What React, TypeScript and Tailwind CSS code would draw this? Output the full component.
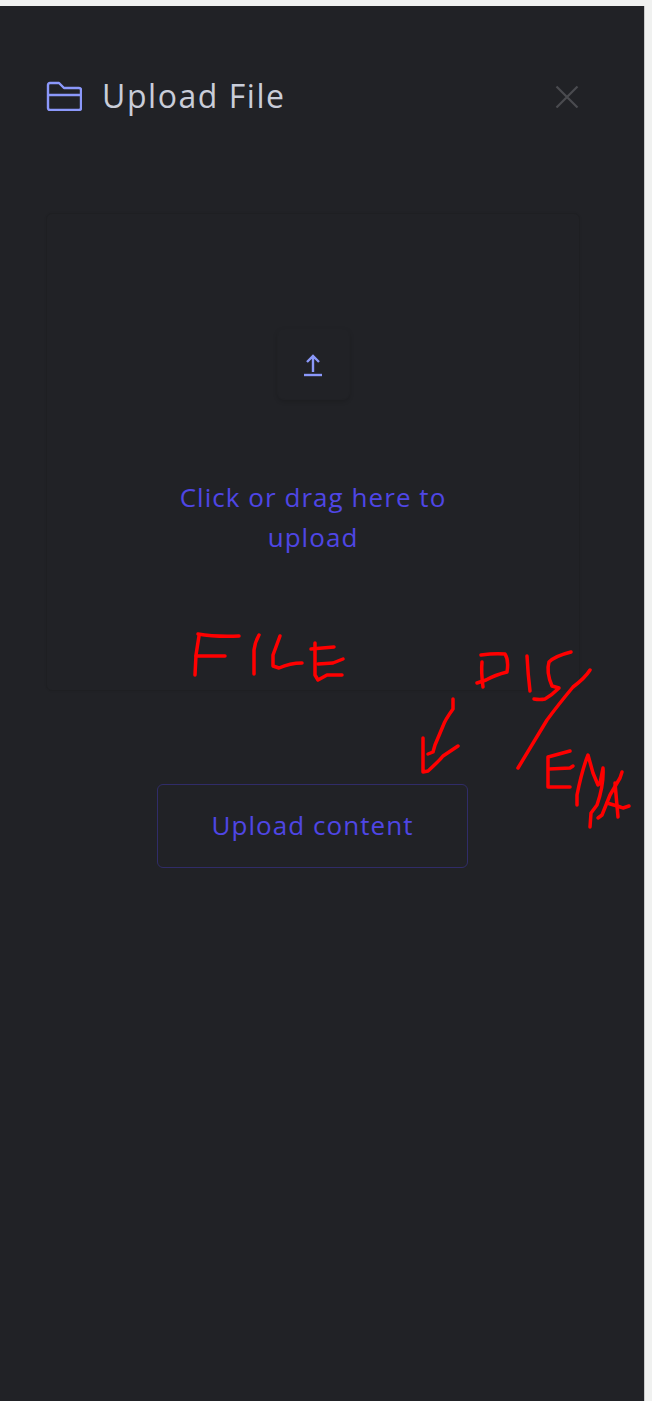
import React from 'react';

// hand-drawn annotations sitting on top of the screenshot
const scribbles = [
    // FILE
    'M198 634 Q215 637 239 636',
    'M199 636 L196 655 L195 675',
    'M196 656 L225 656',
    'M259 635 Q255 642 254 650 L254 674',
    'M280 636 L273 655 L273 666 L279 668 Q290 663 302 663',
    'M315 643 L315 675 L318 680 L327 675 L342 675',
    'M311 649 L334 647',
    'M318 664 L333 663 L343 659',
    // DIS
    'M481 655 Q495 653 505 654 Q509 660 507 672 Q495 675 486 680 L477 683',
    'M482 662 Q481 672 483 687',
    'M527 656 Q528 675 530 691',
    'M571 652 Q555 656 549 662 Q546 672 552 686 L559 688 Q552 695 545 699 Q540 700 534 699',
    // slash
    'M590 670 Q585 678 573 687 Q558 705 547 720 L518 768',
    // arrow
    'M453 699 L453 709 Q445 720 443 726 L435 745 L433 752 L428 754',
    'M423 738 L423 772 L428 771 Q440 760 443 756 L458 746',
    // ENA
    'M570 751 L548 757 L548 787 L570 787',
    'M549 769 L570 768 L573 766',
    'M577 805 L577 795 Q582 770 588 755 L593 773 L598 785 L600 783 L603 768 Q604 785 597 805 L591 813 L590 827',
    'M622 772 L620 778 L610 795 L602 815 L598 818',
    'M615 783 L618 817',
    'M607 803 Q618 806 623 808 L629 806',
];

const FolderIcon = () => (
    <svg width="36" height="30" viewBox="0 0 36 30" fill="none" stroke="#8b98fa" strokeWidth="2.4" strokeLinejoin="round">
        <path d="M2 4 Q2 2 4 2 L13 2 L18 7 L33 7 Q35 7 35 9 L35 27 Q35 29 33 29 L4 29 Q2 29 2 27 Z" />
        <path d="M2 14 L35 14" />
    </svg>
);

export default function App() {
    return (
        <div className="relative h-[1401px] w-[652px] overflow-hidden bg-[#f0f1f0] pt-[6px] font-['Open_Sans',sans-serif]">
            <div className="h-[1395px] w-[645px] border-r border-[#c9caca] bg-[#212226] pt-[70px] pl-[46px] pr-[64px]">
                {/* Header */}
                <div className="flex h-10 items-center justify-between">
                    <div className="flex items-center gap-[20px]">
                        <FolderIcon />
                        <span className="text-[32px] leading-10 tracking-[1.55px] text-[#c9cdd9]">Upload File</span>
                    </div>
                    <svg className="mr-[1px]" width="24" height="24" viewBox="0 0 24 24" fill="none" stroke="#4a4b4f" strokeWidth="2.2">
                        <path d="M1.5 2.5 L22.5 23.5 M22.5 2.5 L1.5 23.5" />
                    </svg>
                </div>

                {/* Dropzone */}
                <div className="mt-[97px] flex h-[478px] flex-col items-center rounded-md border border-[#1e1f22] pt-[114px] shadow-[0_0_2px_rgba(0,0,0,0.1)]">
                    <div className="flex h-[72px] w-[73px] items-center justify-center rounded-lg border border-[#202125] shadow-[0_2px_4px_rgba(0,0,0,0.15)]">
                        <svg className="mt-[2px]" width="20" height="24" viewBox="0 0 20 24" fill="none" stroke="#8b98fa" strokeWidth="2.4">
                            <path d="M10 3 L10 19 M4 9 L10 3 L16 9" />
                            <path d="M1 22 L19 22" />
                        </svg>
                    </div>
                    <p className="mt-[77px] w-[320px] text-center text-[26px] leading-10 tracking-[1.05px] text-[#4f46e5]">
                        Click or drag here to upload
                    </p>
                </div>

                {/* Submit */}
                <button className="ml-[111px] mt-[93px] flex h-[84px] w-[311px] items-center justify-center rounded-md border border-[#302c68] pb-[2px] text-[26px] tracking-[1.05px] text-[#4f46e5]">
                    Upload content
                </button>
            </div>

            <svg className="pointer-events-none absolute left-0 top-0" width="652" height="1401" fill="none" stroke="#ff0000" strokeWidth="3.5" strokeLinecap="round" strokeLinejoin="round">
                {scribbles.map((d, i) => (
                    <path key={i} d={d} />
                ))}
            </svg>
        </div>
    );
}
